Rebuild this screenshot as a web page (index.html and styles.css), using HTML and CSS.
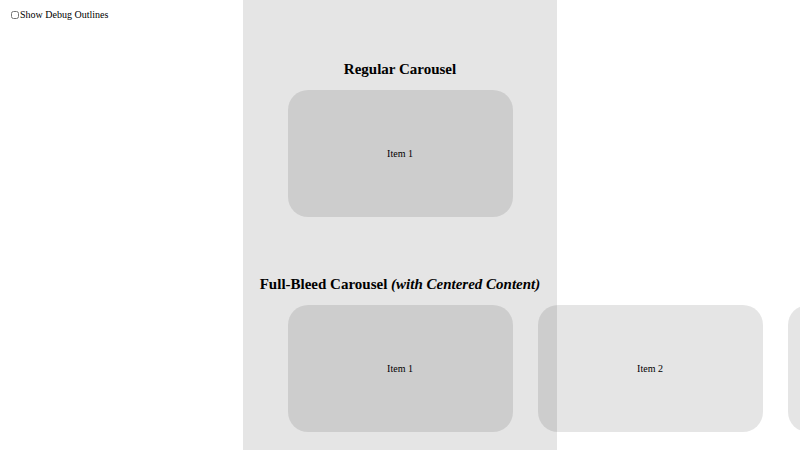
FILE: index.html
```html
<!DOCTYPE html>
<html>
<head>
<meta charset="utf-8">
<link rel="stylesheet" href="styles.css">
</head>
<body>
<label class="debug-toggle"><input type="checkbox" class="debug-box">Show Debug Outlines</label>
<main class="page">
  <section class="demo">
    <h2 class="demo-title">Regular Carousel</h2>
    <div class="carousel">
      <div class="track">
        <div class="item">Item 1</div>
      </div>
    </div>
  </section>
  <section class="demo">
    <h2 class="demo-title">Full-Bleed Carousel <em>(with Centered Content)</em></h2>
    <div class="carousel bleed">
      <div class="track">
        <div class="item">Item 1</div>
        <div class="item">Item 2</div>
        <div class="item">Item 3</div>
      </div>
    </div>
  </section>
</main>
</body>
</html>
```
FILE: styles.css
```css
html, body {
  margin: 0;
  padding: 0;
  overflow: hidden;
  background: #fff;
  font-family: "Liberation Serif", "Times New Roman", serif;
  color: #000;
}
.debug-toggle {
  position: absolute;
  left: 10px;
  top: 9px;
  display: flex;
  align-items: center;
  font-size: 10px;
  line-height: 11px;
}
.debug-box {
  width: 8px;
  height: 8px;
  margin: 0 1px 0 1px;
}
.page {
  width: 313.5px;
  margin: 0 auto;
  min-height: 100vh;
  background: rgba(0, 0, 0, 0.1);
  padding-top: 61px;
  box-sizing: border-box;
  display: flex;
  flex-direction: column;
  gap: 59.5px;
}
.demo-title {
  margin: 0 0 12px;
  font-size: 15px;
  line-height: 17px;
  text-align: center;
  font-weight: bold;
}
.carousel {
  padding: 0 44.25px;
}
.track {
  display: flex;
  gap: 25px;
}
.item {
  flex: 0 0 225px;
  height: 126.5px;
  border-radius: 20px;
  background: rgba(0, 0, 0, 0.1);
  display: flex;
  align-items: center;
  justify-content: center;
  font-size: 10px;
}
```
